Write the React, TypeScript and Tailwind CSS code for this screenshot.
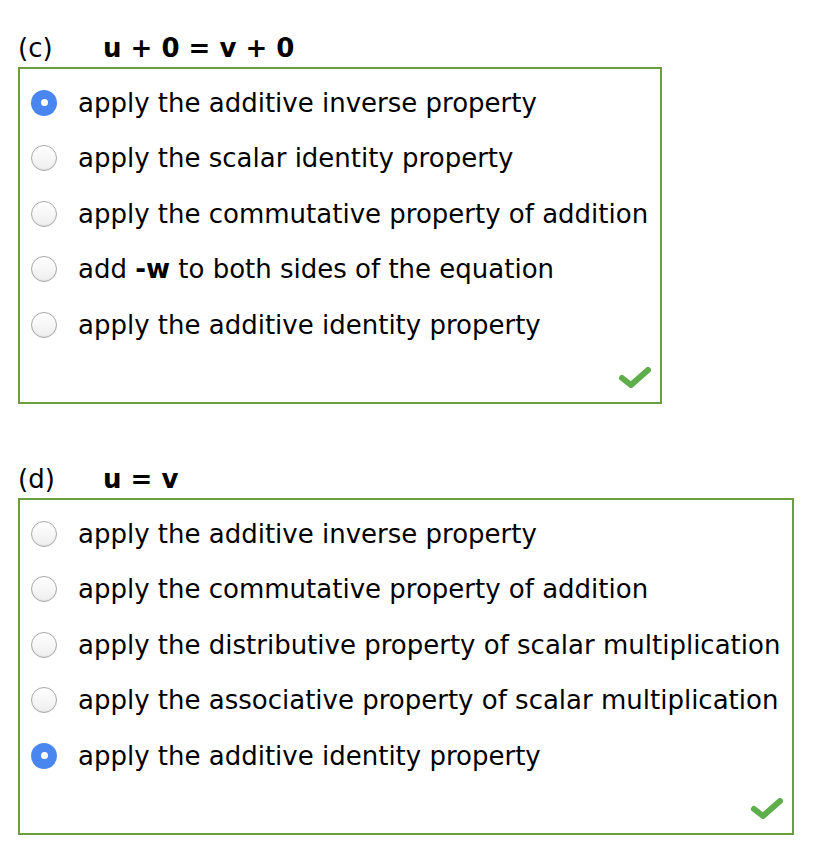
import React from 'react';

type Option = { label: React.ReactNode; checked?: boolean };

function Radio({ checked }: { checked?: boolean }) {
  if (checked) {
    return (
      <span className="flex h-[26px] w-[26px] shrink-0 items-center justify-center rounded-full bg-[#4a86f0]">
        <span className="h-[7px] w-[7px] rounded-full bg-white" />
      </span>
    );
  }
  return (
    <span className="h-[26px] w-[26px] shrink-0 rounded-full border border-[#a9a9a9] bg-gradient-to-b from-white to-[#eeeeee] shadow-[inset_0_-1px_1px_rgba(0,0,0,0.06)]" />
  );
}

function Check() {
  return (
    <svg width="34" height="26" viewBox="0 0 34 26" className="blur-[0.4px]">
      <path
        d="M4 14 L13 21 L30 6"
        fill="none"
        stroke="#5fae4c"
        strokeWidth="6"
        strokeLinecap="round"
        strokeLinejoin="round"
      />
    </svg>
  );
}

function Question({
  tag,
  formula,
  options,
  width,
}: {
  tag: string;
  formula: React.ReactNode;
  options: Option[];
  width: string;
}) {
  return (
    <div className="pl-[18px]">
      <div className="flex h-[30px] items-center">
        <span className="w-[85px]">{tag}</span>
        <span className="font-bold">{formula}</span>
      </div>
      <div className={`mt-[4px] ${width} h-[337px] border-2 border-[#6c9e3f] flex flex-col`}>
        <div className="flex flex-col pt-[6px]">
          {options.map((o, i) => (
            <div key={i} className="flex h-[55.5px] items-center pl-[11px]">
              <Radio checked={o.checked} />
              <span className="ml-[21px] whitespace-nowrap">{o.label}</span>
            </div>
          ))}
        </div>
        <div className="mt-auto flex justify-end pb-[12px] pr-[8px]">
          <Check />
        </div>
      </div>
    </div>
  );
}

export default function App() {
  return (
    <div
      className="min-h-screen bg-white pt-[33px] text-[26px] leading-none text-black"
      style={{ fontFamily: '"DejaVu Sans", Verdana, sans-serif' }}
    >
      <Question
        tag="(c)"
        formula={<>u + 0 = v + 0</>}
        width="w-[644px]"
        options={[
          { label: 'apply the additive inverse property', checked: true },
          { label: 'apply the scalar identity property' },
          { label: 'apply the commutative property of addition' },
          {
            label: (
              <>
                add <b>-w</b> to both sides of the equation
              </>
            ),
          },
          { label: 'apply the additive identity property' },
        ]}
      />
      <div className="h-[60px]" />
      <Question
        tag="(d)"
        formula={<>u = v</>}
        width="w-[776px]"
        options={[
          { label: 'apply the additive inverse property' },
          { label: 'apply the commutative property of addition' },
          { label: 'apply the distributive property of scalar multiplication' },
          { label: 'apply the associative property of scalar multiplication' },
          { label: 'apply the additive identity property', checked: true },
        ]}
      />
    </div>
  );
}
